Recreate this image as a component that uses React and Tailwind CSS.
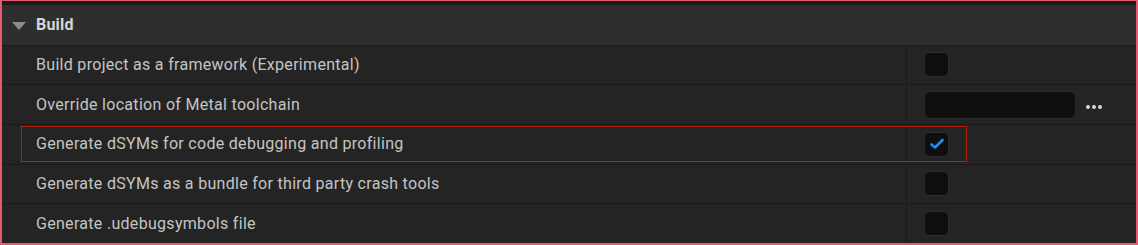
import React from "react";

const rows = [
  { id: "framework", label: "Build project as a framework (Experimental)", kind: "check", checked: false },
  { id: "metal", label: "Override location of Metal toolchain", kind: "path" },
  { id: "dsyms", label: "Generate dSYMs for code debugging and profiling", kind: "check", checked: true, highlight: true },
  { id: "bundle", label: "Generate dSYMs as a bundle for third party crash tools", kind: "check", checked: false },
  { id: "udebug", label: "Generate .udebugsymbols file", kind: "check", checked: false },
];

const CheckBox = ({ checked }) => (
  <div className="w-[25px] h-[25px] rounded-[5px] bg-[#0f0f0f] border border-[#2c2c2c] flex items-center justify-center">
    {checked && (
      <svg width="14" height="12" viewBox="0 0 14 12">
        <path d="M1.5 6.5 L5 9.5 L12.5 2" fill="none" stroke="#1c8cf5" strokeWidth="2.6" strokeLinecap="round" strokeLinejoin="round" />
      </svg>
    )}
  </div>
);

const PathField = () => (
  <div className="flex items-center">
    <div className="w-[152px] h-[28px] rounded-[6px] bg-[#0f0f0f] border border-[#2c2c2c]" />
    <div className="flex items-center gap-[2px] ml-[10px] mt-[4px]">
      <span className="w-[4px] h-[4px] rounded-full bg-[#d8d8d8]" />
      <span className="w-[4px] h-[4px] rounded-full bg-[#d8d8d8]" />
      <span className="w-[4px] h-[4px] rounded-full bg-[#d8d8d8]" />
    </div>
  </div>
);

export default function App() {
  return (
    <div
      className="w-[1138px] h-[245px] bg-[#242424] border-t border-l-2 border-b-2 border-r-2 border-[#e45a72] overflow-hidden flex flex-col"
      style={{ fontFamily: "Roboto, 'Noto Sans', sans-serif" }}
    >
      <div className="h-[4px] bg-[#1b1b1b]" />
      <div className="h-[40px] bg-[#2e2e2e] flex items-center">
        <svg width="14" height="8" viewBox="0 0 14 8" className="ml-[10px] mt-[2px]">
          <path d="M0 0 H14 L7 8 Z" fill="#8c8c8c" />
        </svg>
        <span className="ml-[10px] text-[16px] font-bold tracking-[0.2px] text-[#d6d6d6]">Build</span>
      </div>
      {rows.map((r) => (
        <div key={r.id} className="relative h-[40px] flex border-t border-[#1a1a1a]">
          <div className="w-[904px] flex items-center pl-[34px] text-[16px] tracking-[0.3px] text-[#c4c4c4]">
            {r.label}
          </div>
          <div className="flex-1 flex items-center pl-[17px] border-l border-[#1c1c1c]">
            {r.kind === "check" ? <CheckBox checked={r.checked} /> : <PathField />}
          </div>
          {r.highlight && (
            <div className="absolute left-[19px] top-[1px] w-[946px] h-[36px] border border-[#b3200e] pointer-events-none" />
          )}
        </div>
      ))}
    </div>
  );
}
